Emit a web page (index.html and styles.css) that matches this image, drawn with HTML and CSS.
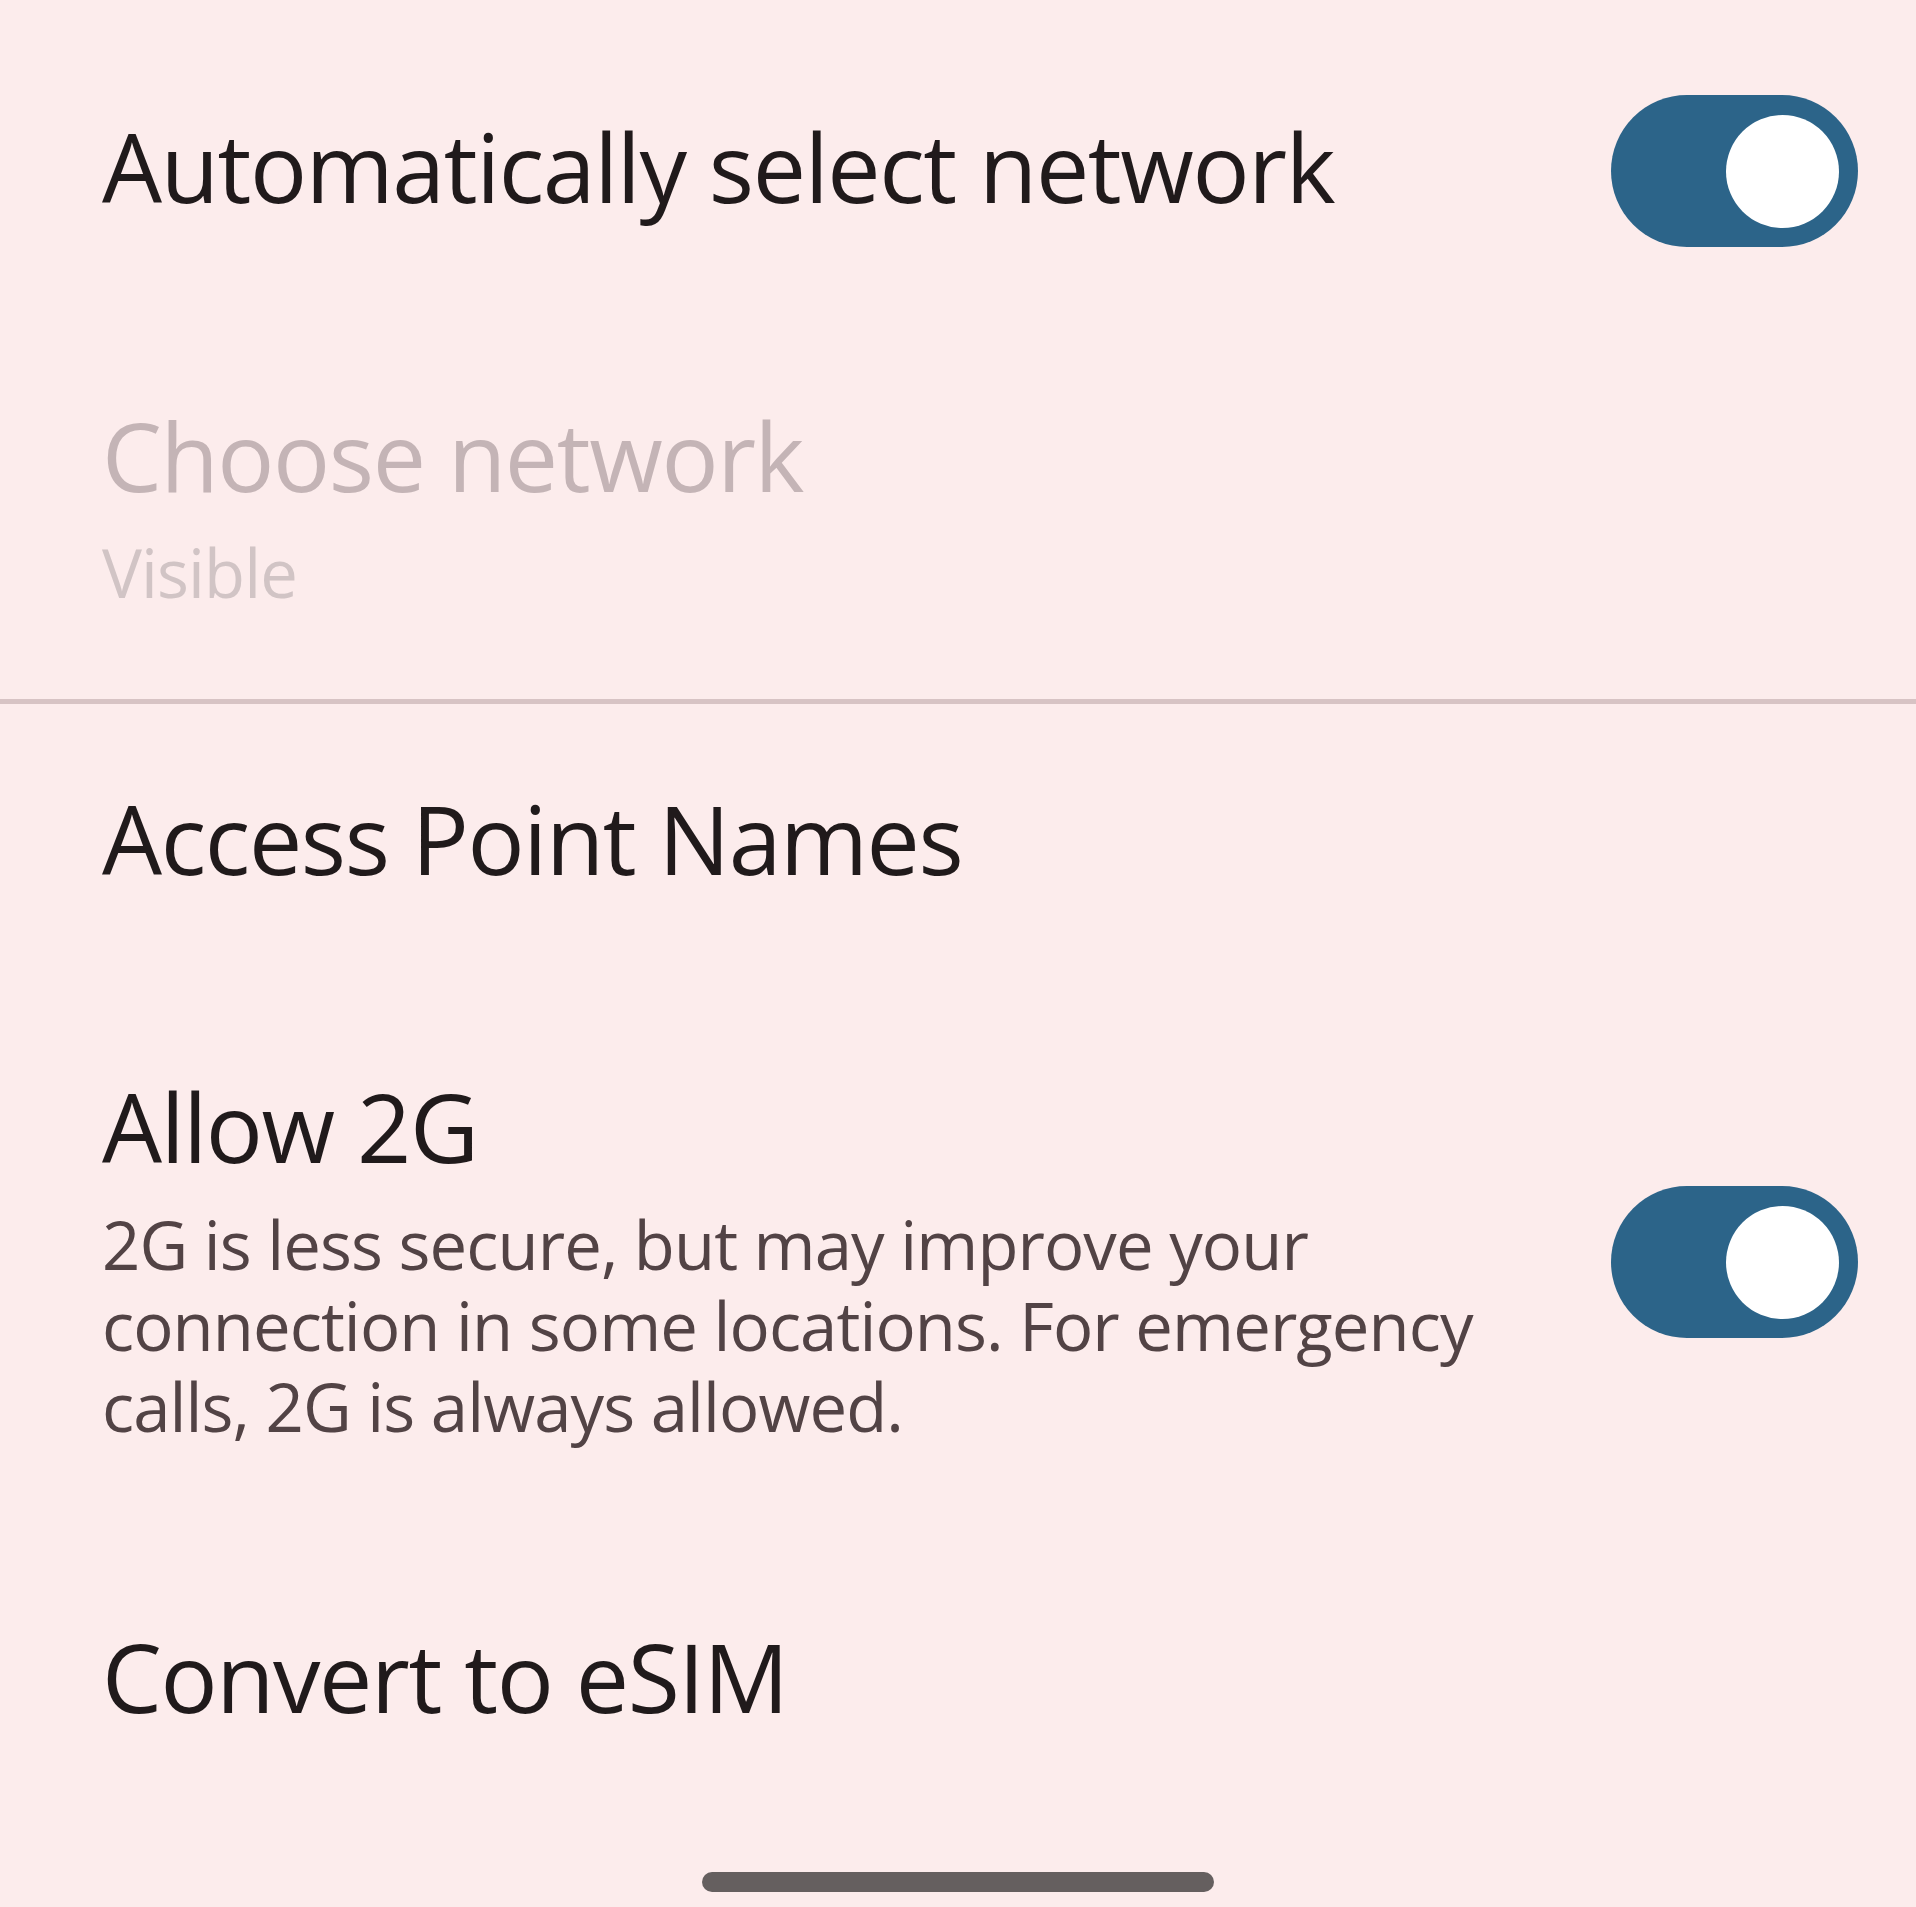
FILE: index.html
```html
<!DOCTYPE html>
<html lang="en">
<head>
<meta charset="utf-8">
<title>Network settings</title>
<link rel="stylesheet" href="styles.css">
</head>
<body>
<main class="screen">
  <section class="group">
    <div class="pref pref-first">
      <div class="pref-text pref-text-lift">
        <div class="pref-title">Automatically select network</div>
      </div>
      <div class="switch switch-on" role="switch" aria-checked="true"><span class="thumb"></span></div>
    </div>
    <div class="pref pref-disabled pref-last">
      <div class="pref-text">
        <div class="pref-title">Choose network</div>
        <div class="pref-summary">Visible</div>
      </div>
    </div>
  </section>
  <div class="divider" role="separator"></div>
  <section class="group">
    <div class="pref pref-apn">
      <div class="pref-text">
        <div class="pref-title">Access Point Names</div>
      </div>
    </div>
    <div class="pref pref-2g">
      <div class="pref-text pref-text-narrow">
        <div class="pref-title">Allow 2G</div>
        <div class="pref-summary">2G is less secure, but may improve your connection in some locations. For emergency calls, 2G is always allowed.</div>
      </div>
      <div class="switch switch-on switch-2g" role="switch" aria-checked="true"><span class="thumb"></span></div>
    </div>
    <div class="pref pref-esim">
      <div class="pref-text">
        <div class="pref-title">Convert to eSIM</div>
      </div>
    </div>
  </section>
  <footer class="nav-area">
    <div class="home-bar"></div>
  </footer>
</main>
</body>
</html>
```

FILE: styles.css
```css
html, body {
  margin: 0;
  padding: 0;
  background: #fcecec;
}

body {
  font-family: "Open Sans", "Noto Sans", sans-serif;
  color: #201a1b;
}

.screen {
  width: 1916px;
  height: 1907px;
  display: flex;
  flex-direction: column;
  overflow: hidden;
}

.screen > * {
  flex-shrink: 0;
}

.group {
  display: flex;
  flex-direction: column;
}

.pref {
  display: flex;
  align-items: center;
  padding: 87px 58px 87px 102px;
}

.pref-first {
  padding-top: 95px;
  padding-bottom: 64px;
}

.pref-last {
  padding-bottom: 86px;
}

.pref-apn {
  padding-top: 77px;
}

.pref-2g {
  padding-bottom: 86px;
}

.pref-esim {
  padding-top: 86px;
  padding-bottom: 0;
}

.pref-text {
  flex: 1;
  display: flex;
  flex-direction: column;
  gap: 20px;
}

.pref-text-lift {
  margin-bottom: 10px;
}

.pref-text-narrow {
  margin-right: 106px;
}

.pref-title {
  font-size: 95px;
  line-height: 114px;
  letter-spacing: -1.4px;
  color: #201a1b;
  white-space: nowrap;
}

.pref-summary {
  font-size: 67px;
  line-height: 81px;
  letter-spacing: -0.9px;
  color: #524345;
}

.pref-2g .pref-text {
  gap: 21px;
}

.pref-disabled .pref-title {
  color: #c4b4b6;
}

.pref-disabled .pref-summary {
  color: #d1c4c5;
}

.divider {
  height: 5px;
  background: #d7c3c4;
}

.switch {
  flex: none;
  width: 247px;
  height: 152px;
  box-sizing: border-box;
  border-radius: 76px;
  background: #2c6489;
  display: flex;
  align-items: center;
  justify-content: flex-end;
  padding: 0 19px;
}

.switch-2g {
  margin-top: 8px;
}

.thumb {
  width: 113px;
  height: 113px;
  border-radius: 50%;
  background: #ffffff;
}

.nav-area {
  flex: 1 0 auto;
  display: flex;
  justify-content: center;
  padding-top: 139px;
}

.home-bar {
  width: 512px;
  height: 20px;
  border-radius: 10px;
  background: #655f5f;
}
```
